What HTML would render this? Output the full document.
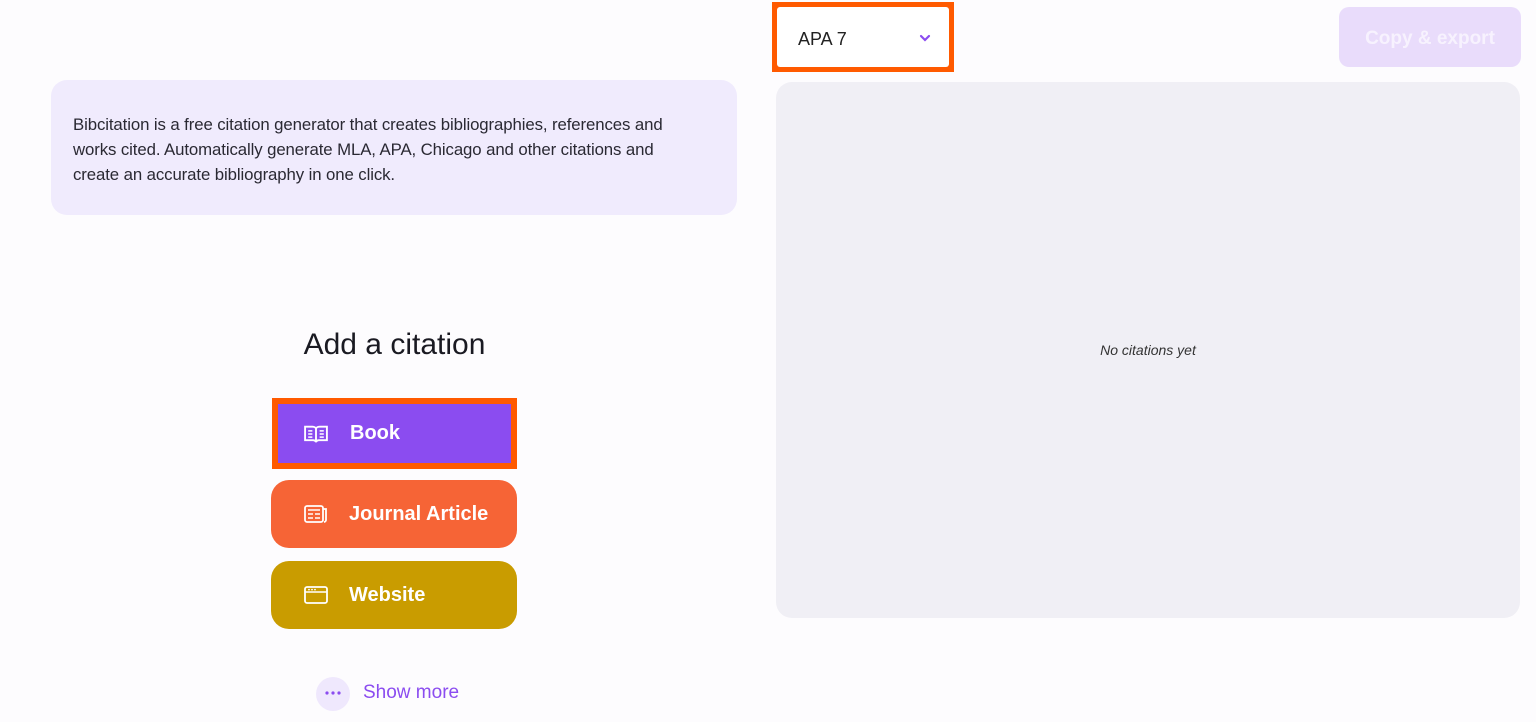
<!DOCTYPE html>
<html><head><meta charset="utf-8"><style>
*{box-sizing:border-box;margin:0;padding:0}
body{width:1536px;height:722px;background:#fdfcfe;font-family:"Liberation Sans",sans-serif;position:relative;overflow:hidden;color:#1c1b22}
.abs{position:absolute}
svg{display:block}
.info{left:51px;top:80px;width:686px;height:135px;background:#f0ebfd;border-radius:16px;padding:32px 0 0 22px;font-size:16.8px;line-height:25px;color:#2a2933;white-space:nowrap;letter-spacing:-0.1px}
.panel{left:776px;top:82px;width:744px;height:536px;background:#f0eff5;border-radius:16px}
.btn{position:absolute;color:#fff;font-weight:bold;font-size:20px;display:flex;align-items:center}
.btn svg{position:absolute;left:32px}
.btn span{position:absolute;left:78px}
</style></head><body>
<div class="abs" style="left:772px;top:2px;width:182px;height:70px;background:#ff5a00;padding:5px">
 <div style="background:#fff;width:100%;height:100%;border-radius:3px;position:relative">
  <span class="abs" style="left:21px;top:22px;font-size:18px;color:#222">APA 7</span>
  <svg class="abs" style="left:142px;top:27px" width="12" height="8" viewBox="0 0 12 8"><path d="M2 2l4 4 4-4" stroke="#8b4cf0" stroke-width="2.2" fill="none" stroke-linecap="round"/></svg>
 </div>
</div>
<div class="abs" style="left:1339px;top:7px;width:182px;height:60px;background:#e9dcfb;border-radius:10px;color:#f7f2fe;font-size:19px;font-weight:bold;text-align:center;line-height:64px">Copy &amp; export</div>
<div class="abs info">Bibcitation is a free citation generator that creates bibliographies, references and<br>works cited. Automatically generate MLA, APA, Chicago and other citations and<br>create an accurate bibliography in one click.</div>
<div class="abs panel"><div class="abs" style="left:0;right:0;top:260px;text-align:center;font-style:italic;font-size:14px;color:#333">No citations yet</div></div>
<div class="abs" style="left:242px;width:305px;top:328px;text-align:center;font-size:30px;color:#1a1a22">Add a citation</div>
<div class="abs" style="left:272px;top:398px;width:245px;height:71px;background:#ff5a00;padding:6px">
 <div class="btn" style="left:6px;top:6px;width:233px;height:59px;background:#8b4cf0">
  <svg width="26" height="22" viewBox="0 0 25 20" style="left:25px"><path d="M2 3h7c2 0 3.5 1 3.5 2.5V18c0-1.2-1.5-2-3-2H2zM23 3h-7c-2 0-3.5 1-3.5 2.5V18c0-1.2 1.5-2 3-2H23z" fill="none" stroke="#fff" stroke-width="1.8"/><path d="M5 7h4M5 10h4M5 13h4M16 7h4M16 10h4M16 13h4" stroke="#fff" stroke-width="1.4"/></svg>
  <span style="left:72px">Book</span>
 </div>
</div>
<div class="btn" style="left:271px;top:480px;width:246px;height:68px;background:#f66436;border-radius:18px">
 <svg width="26" height="22" viewBox="0 0 26 20"><rect x="2" y="2" width="18" height="16" rx="2" fill="none" stroke="#fff" stroke-width="1.8"/><path d="M20 5h3v11c0 1-1 2-2 2" fill="none" stroke="#fff" stroke-width="1.8"/><path d="M5 6h12M5 10h5M12 10h5M5 14h5M12 14h5" stroke="#fff" stroke-width="1.4"/></svg>
 <span>Journal Article</span>
</div>
<div class="btn" style="left:271px;top:561px;width:246px;height:68px;background:#c99c00;border-radius:18px">
 <svg width="26" height="22" viewBox="0 0 26 20"><rect x="2" y="2" width="22" height="16" rx="2" fill="none" stroke="#fff" stroke-width="1.8"/><path d="M2 7h22" stroke="#fff" stroke-width="1.6"/><circle cx="6" cy="4.6" r=".9" fill="#fff"/><circle cx="9" cy="4.6" r=".9" fill="#fff"/><circle cx="12" cy="4.6" r=".9" fill="#fff"/></svg>
 <span>Website</span>
</div>
<div class="abs" style="left:316px;top:677px;width:34px;height:34px;border-radius:50%;background:#efe8fd"></div>
<svg class="abs" style="left:325px;top:691px" width="16" height="4"><circle cx="2" cy="2" r="1.6" fill="#8b4cf0"/><circle cx="8" cy="2" r="1.6" fill="#8b4cf0"/><circle cx="14" cy="2" r="1.6" fill="#8b4cf0"/></svg>
<div class="abs" style="left:363px;top:682px;font-size:19px;color:#8b4cf0">Show more</div>
</body></html>
